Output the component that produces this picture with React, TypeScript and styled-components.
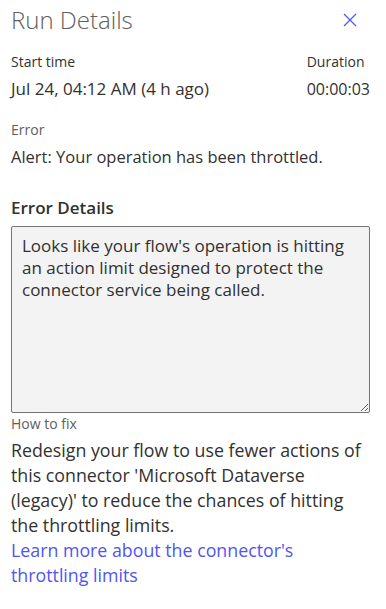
import React from "react";
import styled, { createGlobalStyle } from "styled-components";

const Global = createGlobalStyle`
  html, body { margin: 0; padding: 0; background: #ffffff; }
  body { font-family: "Open Sans", "Noto Sans", sans-serif; color: #323130; }
  * { box-sizing: border-box; }
`;

const Panel = styled.div`
  width: 386px;
  padding: 4px 16px 20px 11px;
  display: flex;
  flex-direction: column;
`;

const Header = styled.div`
  display: flex;
  justify-content: space-between;
  align-items: center;
  height: 32px;
  padding-right: 13px;
`;

const Title = styled.h1`
  margin: 0;
  font-size: 24px;
  font-weight: 300;
  color: #605e5c;
  line-height: 32px;
`;

const CloseButton = styled.button`
  border: none;
  background: none;
  padding: 0;
  width: 14px;
  height: 14px;
  display: flex;
  cursor: pointer;
`;

const MetaRow = styled.div`
  display: flex;
  justify-content: space-between;
  margin-top: 17px;
`;

const Field = styled.div`
  display: flex;
  flex-direction: column;
  align-items: flex-start;
`;

const Label = styled.div`
  font-size: 14px;
  line-height: 18px;
  color: #323130;
`;

const MutedLabel = styled(Label)`
  color: #605e5c;
`;

const Value = styled.div<{ $size?: number }>`
  font-size: ${(p) => p.$size ?? 17}px;
  line-height: 24px;
  margin-top: 6px;
  color: #323130;
`;

const Section = styled.div<{ $mt: number }>`
  margin-top: ${(p) => p.$mt}px;
  display: flex;
  flex-direction: column;
`;

const SectionTitle = styled.div`
  font-size: 17px;
  font-weight: 600;
  line-height: 24px;
  color: #323130;
`;

const DetailsBox = styled.textarea`
  margin-top: 6px;
  width: 359px;
  height: 187px;
  background: #f3f3f3;
  border: 1px solid #757575;
  border-radius: 2px;
  padding: 8px 10px;
  font-family: inherit;
  font-size: 17px;
  line-height: 22px;
  color: #323130;
  resize: vertical;
  outline: none;
  display: block;
`;

const Paragraph = styled.div`
  font-size: 17.8px;
  line-height: 25px;
  margin-top: 5px;
  color: #323130;
`;

const Link = styled.a`
  color: #4f55f0;
  text-decoration: none;
  display: block;
`;

export default function App() {
  return (
    <>
      <Global />
      <Panel>
        <Header>
          <Title>Run Details</Title>
          <CloseButton aria-label="Close">
            <svg width="14" height="14" viewBox="0 0 14 14">
              <path d="M1 1 L13 13 M13 1 L1 13" stroke="#4f5ff0" strokeWidth="1.4" fill="none" />
            </svg>
          </CloseButton>
        </Header>
        <MetaRow>
          <Field>
            <Label>Start time</Label>
            <Value>Jul 24, 04:12 AM (4 h ago)</Value>
          </Field>
          <Field>
            <Label>Duration</Label>
            <Value $size={16}>00:00:03</Value>
          </Field>
        </MetaRow>
        <Section $mt={20}>
          <MutedLabel>Error</MutedLabel>
          <Value $size={16.5}>Alert: Your operation has been throttled.</Value>
        </Section>
        <Section $mt={27}>
          <SectionTitle>Error Details</SectionTitle>
          <DetailsBox
            readOnly
            value="Looks like your flow's operation is hitting an action limit designed to protect the connector service being called."
          />
        </Section>
        <Section $mt={2}>
          <MutedLabel>How to fix</MutedLabel>
          <Paragraph>
            Redesign your flow to use fewer actions of this connector 'Microsoft Dataverse (legacy)' to reduce the chances of hitting the throttling limits.
            <Link href="#">Learn more about the connector's throttling limits</Link>
          </Paragraph>
        </Section>
      </Panel>
    </>
  );
}
